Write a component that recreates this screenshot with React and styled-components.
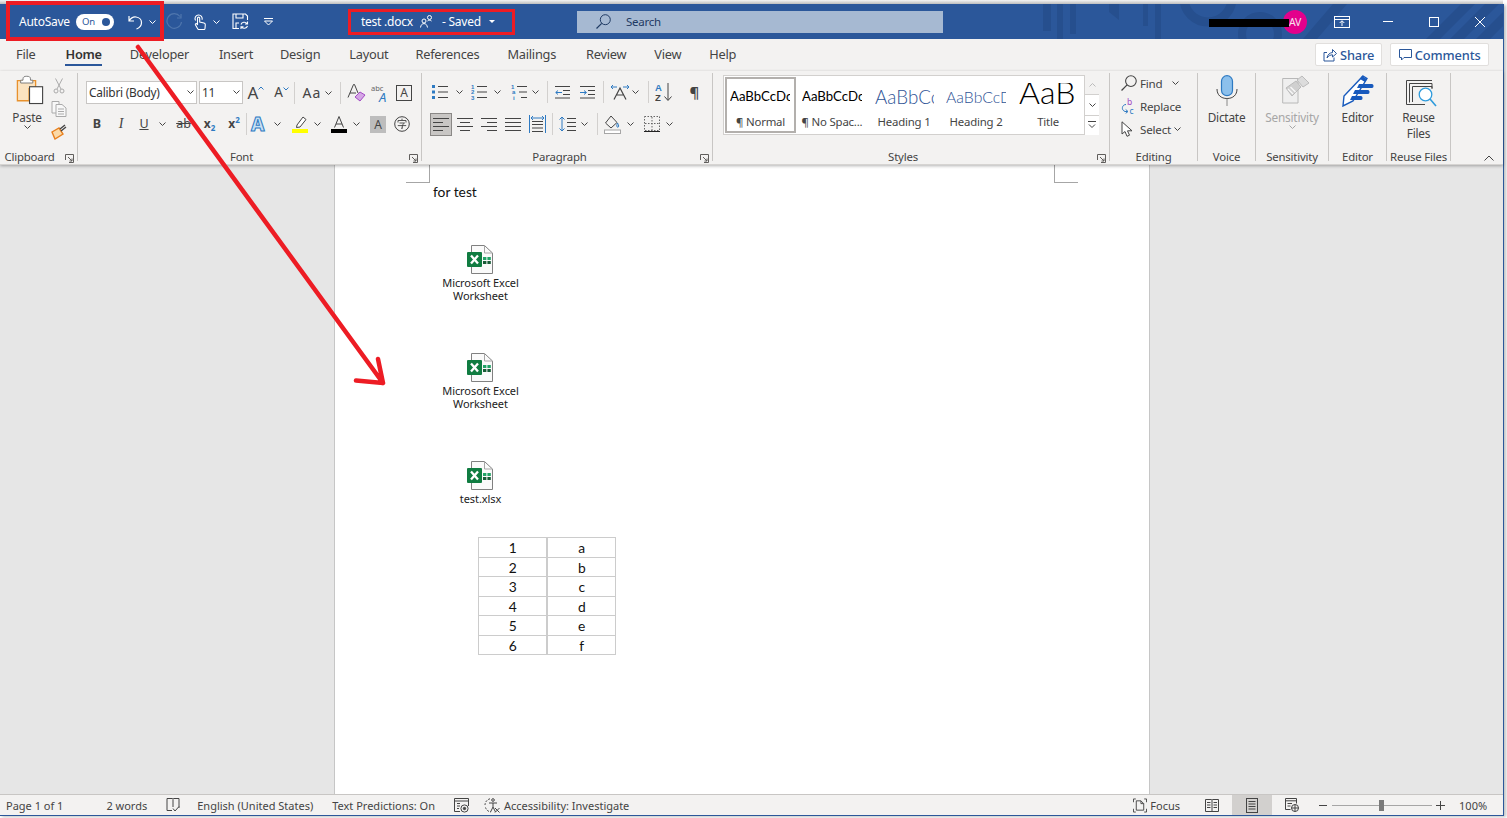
import React from "react";
import styled, { createGlobalStyle } from "styled-components";

const Global = createGlobalStyle`
  html, body { margin: 0; padding: 0; background: #fff; }
  #root { width: 1507px; height: 818px; overflow: hidden; }
  * { box-sizing: border-box; }
`;

const UI = `"Noto Sans", "Open Sans", "Liberation Sans", sans-serif`;
const BODY = `Lato, "Liberation Sans", sans-serif`;

const Viewport = styled.div`
  position: relative; width: 1507px; height: 818px; overflow: hidden;
  background: #fff; padding-top: 4px; font-family: ${UI}; color: #444;
`;
const TopShade = styled.div`
  position: absolute; left: 0; right: 4px; top: 0; height: 4px;
  background: linear-gradient(#f4f4f4, #bdbdbd);
`;
const Window = styled.div`
  width: 1504px; height: 812px; display: flex; flex-direction: column;
  border-right: 1px solid #2b579a; border-bottom: 1px solid #2b579a;
  box-shadow: 2px 1px 3px rgba(0,0,0,.25);
`;

/* ---------- title bar ---------- */
const TitleBar = styled.header`
  position: relative; height: 35px; flex: none; background: #2b579a; color: #fff;
  display: flex; align-items: center; padding-left: 19px; font-size: 12px; letter-spacing: -.25px;
  overflow: hidden;
`;
const Pattern = styled.svg`
  position: absolute; right: 0; top: 0; width: 460px; height: 35px;
`;
const TitleItem = styled.div`
  position: relative; flex: none; display: flex; align-items: center; justify-content: ${p => p.$start ? "flex-start" : "center"};
  width: ${p => p.$w}px; height: 24px; margin-left: ${p => p.$ml || 0}px; white-space: nowrap;
`;
const Toggle = styled.div`
  position: relative; flex: none; width: 38px; height: 16px; margin-left: 6px; border-radius: 8px;
  background: #fff; color: #2b579a; display: flex; align-items: center; justify-content: space-between;
  padding: 0 4px 0 6px; font-size: 9.5px;
`;
const ToggleDot = styled.span`
  width: 8px; height: 8px; border-radius: 50%; background: #2b579a;
`;
const SearchBox = styled.div`
  position: relative; flex: none; margin-left: 76px; width: 366px; height: 22px; background: #a6b9d2; color: #1f3a63;
  display: flex; align-items: center; padding-left: 19px; gap: 15px; font-size: 11.5px;
`;
const Redaction = styled.div`
  position: relative; z-index: 1; flex: none; margin: 3px 0 0 266px; width: 80px; height: 8px; background: #000;
`;
const Avatar = styled.div`
  position: relative; flex: none; margin-left: -6px; width: 24px; height: 24px; border-radius: 50%; background: #e3008c;
  color: #f8e0ee; display: flex; align-items: center; justify-content: center; font-size: 10.5px;
`;
const WinControls = styled.div`
  position: relative; display: flex; margin-left: auto;
`;
const WinButton = styled.div`
  width: 46px; height: 35px; display: flex; align-items: center; justify-content: center;
`;

/* ---------- tabs ---------- */
const TabRow = styled.nav`
  flex: none; height: 32px; background: #f3f2f1; display: flex; align-items: flex-start; padding-left: 16px; font-size: 12.8px; letter-spacing: -.25px;
`;
const Tab = styled.div`
  position: relative; margin-left: ${p => p.$ml}px; height: 27px; line-height: 31px; white-space: nowrap; color: #444;
  font-weight: ${p => p.$active ? 600 : 400};
  ${p => p.$active && `color:#333; border-bottom: 2px solid #2b579a;`}
`;
const ShareButton = styled.div`
  flex: none; width: ${p => p.$w}px; height: 23px; margin: 4px 0 0 ${p => p.$ml}px; background: #fff; border: 1px solid #e1dfdd; border-radius: 2px;
  display: flex; align-items: center; justify-content: center; gap: 3px; color: #2b579a; font-weight: 500; font-size: 12.8px; letter-spacing: -.1px;
`;

/* ---------- ribbon ---------- */
const Ribbon = styled.section`
  position: relative; z-index: 2; flex: none; height: 94px; background: #f3f2f1; display: flex; align-items: flex-start; padding-top: 2px;
  box-shadow: 0 1px 3px rgba(0,0,0,.3); border-bottom: 1px solid #d6d4d2;
`;
const Group = styled.div`
  position: relative; flex: none; width: ${p => p.$w}px; height: 88px; border-right: 1px solid #c8c6c4; display: flex; flex-direction: column;
`;
const GroupBody = styled.div`
  flex: 1; min-height: 0; display: ${p => p.$row ? "flex" : "block"}; justify-content: ${p => p.$center ? "center" : "flex-start"};
`;
const GroupLabel = styled.div`
  flex: none; height: 14px; margin-bottom: -3px; line-height: 14px; text-align: center; font-size: 11.4px; letter-spacing: -.2px; color: #444; white-space: nowrap;
  padding-right: ${p => p.$pr || 0}px;
`;
const Launcher = styled.svg`
  position: absolute; right: 3px; bottom: -2px; width: 9px; height: 9px;
`;
const ToolRow = styled.div`
  display: flex; align-items: center; height: ${p => p.$h || 24}px; padding-left: ${p => p.$pl || 0}px; margin-top: ${p => p.$mt || 0}px;
`;
const Tool = styled.div`
  flex: none; width: ${p => p.$w}px; height: 24px; display: flex; align-items: center; justify-content: center; position: relative;
  color: #444;
`;
const ActiveTool = styled(Tool)`
  height: 23px; background: #c8c6c4; border: 1px solid #8a8886;
`;
const RowSep = styled.div`
  flex: none; width: 1px; height: 22px; background: #d2d0ce;
`;
const Combo = styled.div`
  flex: none; width: ${p => p.$w}px; height: 23px; margin-right: ${p => p.$mr || 0}px; background: #fff; border: 1px solid #c8c6c4;
  display: flex; align-items: center; justify-content: space-between; padding: 0 2px 2px 2px; font-size: 11.9px; letter-spacing: -.25px; color: #333; white-space: nowrap;
`;
const LetterA = styled.span`
  font-size: ${p => p.$size || 14}px; line-height: 1; font-weight: ${p => p.$weight || 400};
  font-style: ${p => p.$italic ? "italic" : "normal"}; color: ${p => p.$color || "#444"};
  text-decoration: ${p => p.$deco || "none"}; font-family: ${p => p.$serif ? `"Liberation Serif", serif` : UI};
  letter-spacing: ${p => p.$ls || 0}px;
`;
const Sub = styled.sub`
  font-size: 8px; color: #2e7ac2; line-height: 0; font-weight: 700;
`;
const Sup = styled.sup`
  font-size: 8px; color: #2e7ac2; line-height: 0; font-weight: 700;
`;
const LargeButton = styled.div`
  flex: none; width: ${p => p.$w}px; display: flex; flex-direction: column; align-items: center; padding-top: 2px;
  font-size: 11.8px; letter-spacing: -.2px; line-height: 16px; color: ${p => p.$muted ? "#a6a6a6" : "#444"}; text-align: center;
  margin-left: ${p => p.$ml || 0}px;
`;
const LargeIcon = styled.div`
  height: 32px; margin-bottom: 2px; padding-left: ${p => p.$pl || 0}px; padding-top: ${p => p.$pt || 0}px; display: flex; align-items: flex-start; justify-content: center;
`;
const SmallColumn = styled.div`
  flex: none; width: 24px; margin-left: 1px; display: flex; flex-direction: column; padding-top: 1px;
`;
const SmallCell = styled.div`
  height: 23px; display: flex; align-items: center; justify-content: center;
`;
const EditRow = styled.div`
  height: 20px; margin-bottom: 3px; display: flex; align-items: center; padding-left: 11px; font-size: 11.6px; letter-spacing: -.2px; color: #444;
`;
const EditIcon = styled.div`
  width: 19px; flex: none; display: flex; align-items: center;
`;

/* gallery */
const Gallery = styled.div`
  margin: 2px 0 0 10px; width: 376px; height: 60px; background: #fff; border: 1px solid #d2d0ce; display: flex; padding: 1px 0 1px 1px;
`;
const StyleItem = styled.div`
  flex: none; width: ${p => p.$w}px; height: 56px; overflow: hidden; display: flex; flex-direction: column; align-items: flex-start;
  border: ${p => p.$active ? "2px solid #b3b0ad" : "2px solid transparent"};
`;
const StylePreview = styled.div`
  flex: none; height: ${p => p.$clipTop ? 31 : 36}px; margin-top: ${p => p.$clipTop ? 4 : 0}px; margin-bottom: ${p => p.$clipTop ? 0 : -1}px; padding-bottom: ${p => p.$clipTop ? 14 : 0}px;
  margin-left: ${p => p.$ml}px; width: ${p => p.$cw}px; overflow: hidden; white-space: nowrap; display: flex; align-items: center; justify-content: flex-start;
  font-family: ${BODY}; font-weight: ${p => p.$light ? 300 : 400};
  font-size: ${p => p.$size}px; color: ${p => p.$color || "#000"}; line-height: 1;
`;
const StyleName = styled.div`
  align-self: center; font-size: 11.4px; letter-spacing: -.2px; color: #444; line-height: 16px; white-space: nowrap;
`;
const GalleryScroll = styled.div`
  margin-left: auto; flex: none; width: 15px; margin-top: -2px; margin-bottom: -2px; display: flex; flex-direction: column; border-left: 1px solid #d2d0ce;
`;
const GalleryBtn = styled.div`
  flex: 1; display: flex; align-items: center; justify-content: center; background: ${p => p.$off ? "#f3f2f1" : "#fff"};
  border-bottom: 1px solid #d2d0ce; &:last-child { border-bottom: 0; }
`;
const Collapse = styled.svg`
  position: absolute; left: 1484px; top: 84px; width: 10px; height: 6px;
`;

/* ---------- document ---------- */
const DocArea = styled.main`
  flex: 1; min-height: 0; background: #e6e6e6; padding-left: 334px; overflow: hidden;
`;
const Page = styled.article`
  position: relative; width: 816px; height: 100%; background: #fff; border-left: 1px solid #c6c6c6; border-right: 1px solid #c6c6c6;
  padding: 18px 0 0 98px; font-family: ${BODY}; color: #111;
`;
const CropMark = styled.div`
  position: absolute; top: 0; width: 24px; height: 18px; border-bottom: 1px solid #a6a6a6;
  ${p => p.$left ? `left: 71px; border-right: 1px solid #a6a6a6;` : `left: 719px; border-left: 1px solid #a6a6a6;`}
`;
const Paragraph = styled.p`
  margin: 0; font-size: 13.8px; line-height: 18px; height: 18px;
`;
const Objects = styled.div`
  margin-top: 44px; width: 95px; display: flex; flex-direction: column; gap: 51px;
`;
const Embedded = styled.div`
  display: flex; flex-direction: column; align-items: center; gap: 2px; font-family: ${UI}; font-size: 11px; line-height: 13px; color: #222; text-align: center; letter-spacing: -.08px; white-space: nowrap;
`;
const DataTable = styled.table`
  margin: 32px 0 0 45px; width: 138px; border-collapse: separate; border-spacing: 0; table-layout: fixed; font-family: ${BODY}; font-size: 13.8px; color: #111;
  border-top: 1px solid #ccc; border-left: 1px solid #ccc;
`;
const Cell = styled.td`
  height: 19.5px; padding: 1px 0 0 1px; text-align: center; line-height: 17.5px; border-right: 1px solid #ccc; border-bottom: 1px solid #ccc;
  &:first-child { border-right-width: 2px; }
`;

/* ---------- status bar ---------- */
const StatusBar = styled.footer`
  position: relative; flex: none; height: 21px; background: #f3f2f1; border-top: 1px solid #c8c6c4; display: flex; align-items: center; font-size: 11px; color: #444;
`;
const StatusText = styled.span`
  flex: none; white-space: nowrap; margin-left: ${p => p.$ml || 0}px;
`;
const StatusIcon = styled.div`
  flex: none; width: ${p => p.$w}px; height: 20px; display: flex; align-items: center; justify-content: center; margin-left: ${p => p.$ml || 0}px;
  background: ${p => p.$active ? "#d2d0ce" : "transparent"};
`;
const Slider = styled.div`
  position: relative; flex: none; width: 100px; height: 1px; margin-left: 5px; background: #a6a6a6;
`;
const SliderThumb = styled.div`
  position: absolute; left: 47px; top: -5px; width: 5px; height: 11px; background: #7a7a7a;
`;

/* ---------- annotations ---------- */
const RedBox = styled.div`
  position: absolute; left: ${p => p.$x}px; top: ${p => p.$y}px; width: ${p => p.$w}px; height: ${p => p.$h}px; border: ${p => p.$b}px solid #ed1c24; z-index: 5;
`;
const ArrowOverlay = styled.svg`
  position: absolute; left: 0; top: 0; width: 1507px; height: 818px; z-index: 5; pointer-events: none;
`;

/* ---------- icons ---------- */
const S = { fill: "none", stroke: "#444", strokeWidth: 1 };
const Chev = ({ c = "#444" }) => (
  <svg width="7" height="4" viewBox="0 0 7 4" style={{ flex: "none" }}><path d="M.5.5 3.5 3.5 6.5.5" fill="none" stroke={c} /></svg>
);
const Launch = () => (
  <Launcher viewBox="0 0 9 9"><path d="M.5 6V.5H8.5V8.5H4M3 3 7 7M7 4.5V7H4.5" fill="none" stroke="#605e5c" /></Launcher>
);
const ExcelIcon = () => (
  <svg width="27" height="29" viewBox="0 0 27 29">
    <path d="M4.5.5H17.5L25.5 8V28.5H4.5Z" fill="#fafafa" stroke="#808080" />
    <path d="M17.5.5V8H25.5" fill="none" stroke="#a6a6a6" />
    <rect x="0" y="7" width="15" height="15" rx="1" fill="#107c41" />
    <path d="M4 10.5 11 18.5M11 10.5 4 18.5" stroke="#fff" strokeWidth="2.3" />
    <path d="M16 12h3.4v3H16zM20.4 12h3.4v3h-3.4z" fill="#21a366" />
    <path d="M16 16h3.4v3H16zM20.4 16h3.4v3h-3.4z" fill="#185c37" />
  </svg>
);
const PasteIcon = () => (
  <svg width="28" height="30" viewBox="0 0 30 31">
    <path d="M1.5 5.5H21V14H14V27H1.5Z" fill="#fbe3c0" stroke="#e8912d" strokeWidth="1.4" />
    <path d="M7.5 5V3.5C7.5 1.5 9 .8 11.5.8S15.5 1.5 15.5 3.5V5H18V8H5V5Z" fill="#fff" stroke="#777" />
    <rect x="14.5" y="12" width="14" height="18" fill="#fff" stroke="#444" strokeWidth="1.2" />
  </svg>
);
const Cut = () => (
  <svg width="12" height="16" viewBox="0 0 12 16" {...S} stroke="#aaa">
    <path d="M2.5.5 8 11M9.5.5 4 11" /><circle cx="3" cy="13" r="2" /><circle cx="9" cy="13" r="2" />
  </svg>
);
const Copy = () => (
  <svg width="16" height="16" viewBox="0 0 16 16" fill="#f8f8f8" stroke="#aaa">
    <path d="M1 .5H8V12H1Z" /><path d="M5 3.5H11L15 7V15.5H5Z" /><path d="M7 8h6M7 10.5h6M7 13h6" />
  </svg>
);
const Painter = () => (
  <svg width="16" height="16" viewBox="0 0 16 16">
    <path d="M1 8 8 4 12 10 4 15Z" fill="#fbd9a6" stroke="#e8801e" strokeWidth="1.4" />
    <path d="M9 5 14 1M10 7 15 3" stroke="#444" strokeWidth="1.4" />
  </svg>
);
const Undo = ({ c = "#fff" }) => (
  <svg width="15" height="16" viewBox="0 0 15 16" fill="none" stroke={c} strokeWidth="1.2">
    <path d="M1 2V7H6M1.2 6.8C3 4 5.5 2.6 8 3c3.4.5 5.5 3 5.5 5.5 0 3-2.3 5.5-5 6.5" />
  </svg>
);
const Redo = () => (
  <svg width="17" height="17" viewBox="0 0 17 17" fill="none" stroke="#4f76ad" strokeWidth="1.2">
    <path d="M14 3.5A7.3 7.3 0 1 0 15.5 9M15 1V5H11" />
  </svg>
);
const Touch = () => (
  <svg width="13" height="17" viewBox="0 0 13 17" fill="none" stroke="#fff" strokeWidth="1.1">
    <path d="M2.6 7.5A3.6 3.6 0 1 1 9 6.8" /><path d="M4.5 12V5.2c0-1.5 2.2-1.5 2.2 0V9L11 10c1 .3 1.4 1 1.3 2l-.3 3.5c-.1.7-.5 1-1 1H6c-.6 0-1-.3-1.3-.8L2.5 12c-.6-1.2 1-2 1.8-.8Z" />
  </svg>
);
const SaveSync = () => (
  <svg width="17" height="17" viewBox="0 0 17 17" fill="none" stroke="#fff" strokeWidth="1.1">
    <path d="M7 15.5H1V1H13.5L15.5 3V7" /><path d="M4 1V5H11V1M4 15V10H7" />
    <path d="M9 11.5A3.5 3.5 0 0 1 15 10.5M15.5 8.5V11H13M15.5 13A3.5 3.5 0 0 1 9.5 14M9 16V13.7H11.5" />
  </svg>
);
const Customize = () => (
  <svg width="9" height="8" viewBox="0 0 9 8"><path d="M0 .5H9" stroke="#fff" /><path d="M.5 3H8.5L4.5 7Z" fill="none" stroke="#fff" /></svg>
);
const MoreChev = () => (
  <svg width="8" height="8" viewBox="0 0 8 8"><path d="M0 .5H8" stroke="#444" /><path d="M1 3.5 4 6.5 7 3.5" fill="none" stroke="#444" /></svg>
);
const People = () => (
  <svg width="13" height="13" viewBox="0 0 13 13" fill="none" stroke="#fff">
    <circle cx="4" cy="6" r="2" /><path d="M.5 12.5C1 9.8 2.2 8.6 4 8.6S7 9.8 7.5 12.5" />
    <circle cx="9.5" cy="2.5" r="2" /><path d="M7.5 6C8.2 5 10.5 5 11.5 6" />
  </svg>
);
const Caret = ({ c = "#fff" }) => (
  <svg width="6" height="3" viewBox="0 0 6 3"><path d="M0 0H6L3 3Z" fill={c} /></svg>
);
const Magnifier = ({ c = "#1f3a63", size = 15 }) => (
  <svg width={size} height={size} viewBox="0 0 15 15" fill="none" stroke={c}><circle cx="9.3" cy="5.7" r="5" /><path d="M5.7 9.3 .5 14.5" strokeWidth="1.2" /></svg>
);
const RibbonDisplay = () => (
  <svg width="16" height="12" viewBox="0 0 16 12" fill="none" stroke="#fff">
    <rect x=".5" y=".5" width="15" height="11" /><path d="M.5 3.5H15.5" /><path d="M8 10V5M5.7 7 8 4.7 10.3 7" />
  </svg>
);
const ShareIcon = () => (
  <svg width="14" height="14" viewBox="0 0 14 14" fill="none" stroke="#2b579a">
    <path d="M11 9.5V13H1V4.5H4" /><path d="M4 10C4.5 6.5 7 4.6 9.5 4.6V1.5L13.5 5.5 9.5 9V6.8C7.5 6.8 5.5 7.8 4 10Z" />
  </svg>
);
const CommentIcon = () => (
  <svg width="13" height="12" viewBox="0 0 13 12" fill="none" stroke="#2b579a"><path d="M.5.5H12.5V8.5H5L2.5 11V8.5H.5Z" /></svg>
);
const Bullets = ({ kind }) => (
  <svg width="17" height="16" viewBox="0 0 17 16">
    {[2, 7.5, 13].map((y, i) => (
      <g key={y}>
        {kind === "bullet" && <rect x="0" y={y - 1} width="3" height="3" fill="#2e7ac2" />}
        {kind === "number" && <text x="0" y={y + 2.5} fontSize="6" fontWeight="700" fill="#2e7ac2" fontFamily="Liberation Sans">{i + 1}</text>}
        {kind === "multi" && <text x={i} y={y + 2.5} fontSize="6" fontWeight="700" fill="#2e7ac2" fontFamily="Liberation Sans">{["1", "a", "i"][i]}</text>}
        <path d={`M${kind === "multi" ? 6 + i * 2 : 6} ${y + .5}H16`} stroke="#444" />
      </g>
    ))}
  </svg>
);
const Indent = ({ dir }) => (
  <svg width="16" height="14" viewBox="0 0 16 14" fill="none" stroke="#444">
    <path d="M0 1.5H15M8 5.5H15M8 9.5H15M0 13H15" />
    <path d={dir === "in" ? "M0 7.5H6M4 5.5 6.5 7.5 4 9.5" : "M1 7.5H7M3 5.5 .7 7.5 3 9.5"} stroke="#2e7ac2" />
  </svg>
);
const TextDirection = () => (
  <svg width="20" height="16" viewBox="0 0 20 16">
    <path d="M1 3H7M1 3 3 1M1 3 3 5M13 3H19M19 3 17 1M19 3 17 5" fill="none" stroke="#2e7ac2" />
    <path d="M4 15.5 10 4 16 15.5M6.5 11H13.5" fill="none" stroke="#444" strokeWidth="1.2" />
  </svg>
);
const Sort = () => (
  <svg width="19" height="20" viewBox="0 0 19 20">
    <text x="0" y="9" fontSize="9.5" fontWeight="700" fill="#2e7ac2" fontFamily="Liberation Sans">A</text>
    <text x="0" y="19" fontSize="9.5" fontWeight="700" fill="#444" fontFamily="Liberation Sans">Z</text>
    <path d="M13 1V18M9.5 14.5 13 18.5 16.5 14.5" fill="none" stroke="#444" />
  </svg>
);
const Align = ({ k }) => {
  const m = {
    left: [[0, 16], [0, 10], [0, 16], [0, 10]],
    center: [[0, 16], [3, 13], [0, 16], [3, 13]],
    right: [[0, 16], [6, 16], [0, 16], [6, 16]],
    justify: [[0, 16], [0, 16], [0, 16], [0, 16]],
  }[k];
  return (
    <svg width="16" height="14" viewBox="0 0 16 14">
      {m.map((r, i) => <path key={i} d={`M${r[0]} ${i * 4 + 1}.5H${r[1]}`} stroke="#444" />)}
    </svg>
  );
};
const Distributed = () => (
  <svg width="17" height="18" viewBox="0 0 17 18" fill="none">
    <path d="M3 9.5H14M3 13H14M3 16.5H14M3 6.5H14" stroke="#444" />
    <path d="M.5 0V18M16.5 0V18M2 3H15M2 3 4 1M2 3 4 5M15 3 13 1M15 3 13 5" stroke="#2e7ac2" />
  </svg>
);
const LineSpacing = () => (
  <svg width="18" height="16" viewBox="0 0 18 16" fill="none">
    <path d="M3 1V15M.5 3.5 3 1 5.5 3.5M.5 12.5 3 15 5.5 12.5" stroke="#2e7ac2" />
    <path d="M8 2.5H17M8 6.5H17M8 10.5H17M8 14.5H17" stroke="#444" />
  </svg>
);
const Shading = () => (
  <svg width="17" height="19" viewBox="0 0 17 19" fill="none">
    <path d="M7 1 1.5 8 7 13 13 7.5Z" stroke="#444" /><path d="M13.5 8C15 10.5 15 12 13.8 12.3 12.5 12 12.5 10.5 13.5 8Z" stroke="#2e7ac2" />
    <rect x=".5" y="15" width="16" height="3.5" fill="#fff" stroke="#a6a6a6" />
  </svg>
);
const Borders = () => (
  <svg width="16" height="16" viewBox="0 0 16 16" fill="none" stroke="#666" strokeDasharray="1.5 1.5">
    <rect x=".5" y=".5" width="15" height="14" /><path d="M8 1V15M1 7.5H15" />
    <path d="M0 15.5H16" stroke="#222" strokeDasharray="none" />
  </svg>
);
const Eraser = () => (
  <svg width="19" height="19" viewBox="0 0 19 19">
    <path d="M1 14.5 6.5 1.5H7.5L11 10M3 10H9" fill="none" stroke="#444" />
    <path d="M8 14 13 9 18 12 13 18Z" fill="#d5a6e6" stroke="#a24bc4" />
  </svg>
);
const AbcA = () => (
  <svg width="19" height="18" viewBox="0 0 19 18">
    <text x="0" y="6.5" fontSize="7.5" fill="#666" fontFamily="Noto Sans">abc</text>
    <text x="8" y="17.5" fontSize="13" fontStyle="italic" fill="#2e7ac2" fontFamily="Noto Sans">A</text>
  </svg>
);
const BoxA = styled.div`
  width: 16px; height: 16px; flex: none; border: 1px solid #444; display: flex; align-items: center; justify-content: center; font-size: 12px; color: #444;
`;
const TextEffect = () => (
  <svg width="20" height="19" viewBox="0 0 20 19">
    <text x="1" y="16" fontSize="19" fontWeight="800" fill="#c7e0f4" stroke="#2e7ac2" strokeWidth="1" fontFamily="Noto Sans">A</text>
  </svg>
);
const Highlighter = () => (
  <svg width="16" height="18" viewBox="0 0 16 18">
    <path d="M5 10 11 2 14 4.5 8 12 4.5 12.5Z" fill="#fff" stroke="#444" />
    <rect x="0" y="14" width="16" height="4" fill="#ffff00" />
  </svg>
);
const FontColor = () => (
  <svg width="16" height="18" viewBox="0 0 16 18">
    <path d="M3.5 12.5 8 1.5 12.5 12.5M5 9H11" fill="none" stroke="#444" />
    <rect x="0" y="14" width="16" height="4" fill="#000" />
  </svg>
);
const CharShade = styled.div`
  width: 16px; height: 17px; background: #bdbdbd; display: flex; align-items: center; justify-content: center; font-size: 12px; color: #444;
`;
const Enclose = () => (
  <svg width="16" height="16" viewBox="0 0 16 16" fill="none" stroke="#444" style={{ flex: "none" }}>
    <circle cx="8" cy="8" r="7.3" />
    <path d="M8 2.6V4M4 6.5V4.5H12V6.5M5.5 7H10.5L8.3 9V12.5L7 12M3.8 9.6H12.2" strokeWidth=".9" />
  </svg>
);
const Replace = () => (
  <svg width="15" height="16" viewBox="0 0 15 16">
    <text x="6" y="7" fontSize="8.5" fill="#a24bc4" fontFamily="Noto Sans">b</text>
    <text x="8.5" y="15.5" fontSize="8.5" fill="#2e7ac2" fontFamily="Noto Sans">c</text>
    <path d="M5 6.5C1 6.5-.2 12 4 13.5H6.5M4.7 11.5 7 13.5 4.7 15.3" fill="none" stroke="#2e7ac2" />
  </svg>
);
const SelectCursor = () => (
  <svg width="13" height="16" viewBox="0 0 13 16"><path d="M1 .8V13L4 10.5 6 15.3 8.5 14.2 6.5 9.8H11Z" fill="#fff" stroke="#444" /></svg>
);
const Mic = () => (
  <svg width="22" height="31" viewBox="0 0 22 31">
    <rect x="5.5" y=".7" width="11" height="20" rx="5.5" fill="#8cc0ec" stroke="#2e7ac2" strokeWidth="1.2" />
    <path d="M1 14C1 20 5 23.5 11 23.5S21 20 21 14" fill="none" stroke="#444" />
    <path d="M11 23.5V31" stroke="#888" />
  </svg>
);
const Sensitivity = () => (
  <svg width="28" height="29" viewBox="0 0 28 29">
    <path d="M.7 3.5H16V28H.7Z" fill="#efefef" stroke="#b8b8b8" />
    <path d="M4 13 14 6 19 12 10 21Z" fill="#d0d0d0" stroke="#bbb" />
    <path d="M6 14 11 19M8.5 12 13.5 17" stroke="#f8f8f8" strokeWidth="1.3" />
    <path d="M15 5 20 1 27 8 21 12Z" fill="#dcdcdc" stroke="#bbb" />
  </svg>
);
const Pen = () => (
  <svg width="32" height="32" viewBox="0 0 32 32">
    <path d="M21 1 25 3.5 11 26 1 31 2 21Z" fill="#fff" stroke="#185abd" strokeWidth="1.4" />
    <path d="M20 1 25 4 23 7 18 4Z" fill="#185abd" />
    <path d="M17 9H30C32 9 32 13 30 13H15ZM13 15H26C28 15 28 19 26 19H11ZM10 21H19C21 21 21 25 19 25H8Z" fill="#185abd" />
  </svg>
);
const ReuseFiles = () => (
  <svg width="31" height="28" viewBox="0 0 31 28" fill="none">
    <path d="M.5 21V.5H26M3.5 22.5V3.5H26V8" stroke="#444" />
    <path d="M.5 21V24.5H19M6.5 22V6.5H26V9" stroke="#444" />
    <circle cx="19.5" cy="14.5" r="6.3" fill="#fff" stroke="#2e9bdc" strokeWidth="1.3" />
    <path d="M24 19 30 26" stroke="#2e9bdc" strokeWidth="1.6" />
  </svg>
);
const BookCheck = () => (
  <svg width="14" height="14" viewBox="0 0 14 14" fill="none" stroke="#444">
    <path d="M1 .5H6.5L7 1.5 7.5.5H13V10M7 2V9M1 .5V12.5H6" /><path d="M7 10.5 9 13 13 8.5" />
  </svg>
);
const MacroIcon = () => (
  <svg width="15" height="15" viewBox="0 0 15 15" fill="none" stroke="#444">
    <path d="M.5 .5H14.5V8M.5 .5V13.5H6M.5 3H14.5" /><path d="M3 5.5H6M3 8H6M3 10.5H5" />
    <circle cx="10.5" cy="10.5" r="3.6" /><circle cx="10.5" cy="10.5" r="1.2" fill="#444" />
  </svg>
);
const Accessibility = () => (
  <svg width="16" height="15" viewBox="0 0 16 15" fill="none" stroke="#444">
    <path d="M6 .8A6.5 6.5 0 0 0 1 7" strokeDasharray="2 1.3" /><path d="M1.5 9.5A6.5 6.5 0 0 0 7 14" strokeDasharray="2 1.3" />
    <circle cx="9" cy="2" r="1.3" /><path d="M5 5H13M9 5V9M6.5 14 9 9 11.5 14" /><path d="M11 10 15.5 14.5M15.5 10 11 14.5" />
  </svg>
);
const FocusIcon = () => (
  <svg width="15" height="15" viewBox="0 0 15 15" fill="none" stroke="#444">
    <path d="M.5 4V.5H3M12 .5H14.5V4M14.5 11V14.5H12M3 14.5H.5V11" /><path d="M3.5 12.5V2.5H8.5L11.5 5.5V12.5Z" /><path d="M8.5 2.5V5.5H11.5" />
  </svg>
);
const ReadIcon = () => (
  <svg width="14" height="13" viewBox="0 0 14 13" fill="none" stroke="#444">
    <path d="M.5.5H6.5L7 1.2 7.5.5H13.5V12.5H.5ZM7 1.2V12.5" /><path d="M2 3.5H5.5M2 6H5.5M2 8.5H5.5M8.5 3.5H12M8.5 6H12M8.5 8.5H12" />
  </svg>
);
const PrintIcon = () => (
  <svg width="12" height="15" viewBox="0 0 12 15" fill="none" stroke="#444">
    <rect x=".5" y=".5" width="11" height="14" /><path d="M2.5 3.5H9.5M2.5 6H9.5M2.5 8.5H9.5M2.5 11H9.5" />
  </svg>
);
const WebIcon = () => (
  <svg width="14" height="14" viewBox="0 0 14 14" fill="none" stroke="#444">
    <path d="M5.5 11.5H.5V.5H11.5V5.5M.5 2.8H11.5M2.5 5.5H7M2.5 8H5.5" />
    <circle cx="10" cy="10" r="3.5" fill="#f3f2f1" /><path d="M6.5 10H13.5M10 6.5V13.5" />
  </svg>
);

const Patterned = () => (
  <Pattern viewBox="0 0 460 35">
    <g fill="#264f8e">
      <path d="M0 0h8v27H0zM14 0h6v35h-6zM27 0h6v30h-6zM66 0h10v16l-10-8zM100 0h5v22h-5zM112 0h6v35h-6z" />
      <path d="M418 0h14L397 35h-14zM442 0h14L421 35h-14zM460 8v14l-13 13h-14z" />
      <path d="M290 0h14l-30 35h-14z" />
    </g>
    <circle cx="217" cy="30" r="18" fill="none" stroke="#264f8e" strokeWidth="8" />
    <circle cx="165" cy="-6" r="24" fill="none" stroke="#264f8e" strokeWidth="9" />
  </Pattern>
);

const styles = [
  { name: "¶ Normal", text: "AaBbCcDc", size: 13.2, w: 71, ml: 3, cw: 60, active: true },
  { name: "¶ No Spac...", text: "AaBbCcDc", size: 13.2, w: 72, ml: 4, cw: 60 },
  { name: "Heading 1", text: "AaBbCc", size: 18.8, w: 72, ml: 5, cw: 59, color: "#2f5496", light: true },
  { name: "Heading 2", text: "AaBbCcD", size: 15.8, w: 72, ml: 4, cw: 60, color: "#2f5496", light: true },
  { name: "Title", text: "AaB", size: 32, w: 72, ml: 5, cw: 58, light: true, clipTop: true },
];
const rows = [["1", "a"], ["2", "b"], ["3", "c"], ["4", "d"], ["5", "e"], ["6", "f"]];
const tabs = [
  ["File", 0], ["Home", 30], ["Developer", 28], ["Insert", 30], ["Design", 27], ["Layout", 29],
  ["References", 27], ["Mailings", 28], ["Review", 30], ["View", 28], ["Help", 28],
];

export default function App() {
  return (
    <Viewport>
      <Global />
      <TopShade />
      <Window>
        <TitleBar>
          <Patterned />
          <TitleItem $w={51} $start>AutoSave</TitleItem>
          <Toggle>On<ToggleDot /></Toggle>
          <TitleItem $w={26} $ml={8}><Undo /></TitleItem>
          <TitleItem $w={8}><Chev c="#fff" /></TitleItem>
          <TitleItem $w={36}><Redo /></TitleItem>
          <TitleItem $w={14}><Touch /></TitleItem>
          <TitleItem $w={20}><Chev c="#fff" /></TitleItem>
          <TitleItem $w={28}><SaveSync /></TitleItem>
          <TitleItem $w={28}><Customize /></TitleItem>
          <TitleItem $w={51} $ml={79} $start>test .docx</TitleItem>
          <TitleItem $w={28}><People /></TitleItem>
          <TitleItem $w={41} $ml={2} $start>- Saved</TitleItem>
          <TitleItem $w={18}><Caret /></TitleItem>
          <SearchBox><Magnifier />Search</SearchBox>
          <Redaction />
          <Avatar>AV</Avatar>
          <WinControls>
            <WinButton><RibbonDisplay /></WinButton>
            <WinButton><svg width="10" height="1" viewBox="0 0 10 1"><path d="M0 .5H10" stroke="#fff" /></svg></WinButton>
            <WinButton><svg width="10" height="10" viewBox="0 0 10 10"><rect x=".5" y=".5" width="9" height="9" fill="none" stroke="#fff" /></svg></WinButton>
            <WinButton><svg width="10" height="10" viewBox="0 0 10 10"><path d="M0 0 10 10M10 0 0 10" stroke="#fff" /></svg></WinButton>
          </WinControls>
        </TitleBar>

        <TabRow>
          {tabs.map(([t, ml]) => <Tab key={t} $ml={ml} $active={t === "Home"}>{t}</Tab>)}
          <ShareButton $w={67} $ml={579}><ShareIcon />Share</ShareButton>
          <ShareButton $w={99} $ml={8}><CommentIcon />Comments</ShareButton>
        </TabRow>

        <Ribbon>
          <Group $w={78}>
            <GroupBody $row>
              <LargeButton $w={38} $ml={8}>
                <LargeIcon $pl={5}><PasteIcon /></LargeIcon>
                Paste
                <Chev />
              </LargeButton>
              <SmallColumn>
                <SmallCell><Cut /></SmallCell>
                <SmallCell><Copy /></SmallCell>
                <SmallCell><Painter /></SmallCell>
              </SmallColumn>
            </GroupBody>
            <GroupLabel $pr={18}>Clipboard</GroupLabel>
            <Launch />
          </Group>

          <Group $w={344}>
            <GroupBody>
              <ToolRow $h={23} $pl={8} $mt={8}>
                <Combo $w={111} $mr={2}>Calibri (Body)<Chev /></Combo>
                <Combo $w={44}>11<Chev /></Combo>
                <Tool $w={26}><LetterA $size={17}>A</LetterA><svg width="6" height="4" viewBox="0 0 6 4" style={{ marginBottom: 9 }}><path d="M.5 3.5 3 1 5.5 3.5" fill="none" stroke="#2e7ac2" /></svg></Tool>
                <Tool $w={25}><LetterA $size={13.5}>A</LetterA><svg width="6" height="4" viewBox="0 0 6 4" style={{ marginBottom: 7 }}><path d="M.5.5 3 3 5.5.5" fill="none" stroke="#2e7ac2" /></svg></Tool>
                <RowSep />
                <Tool $w={45}><LetterA $size={14} $ls={1}>Aa</LetterA>&nbsp;<Chev /></Tool>
                <RowSep />
                <Tool $w={30}><Eraser /></Tool>
                <Tool $w={19}><AbcA /></Tool>
                <Tool $w={28}><BoxA>A</BoxA></Tool>
              </ToolRow>
              <ToolRow $pl={8} $mt={8}>
                <Tool $w={22}><LetterA $weight={700} $size={12.5}>B</LetterA></Tool>
                <Tool $w={26}><LetterA $italic $serif $size={14}>I</LetterA></Tool>
                <Tool $w={20}><LetterA $deco="underline" $size={12.5}>U</LetterA></Tool>
                <Tool $w={16}><Chev /></Tool>
                <Tool $w={27}><LetterA $deco="line-through" $size={12.5}>ab</LetterA></Tool>
                <Tool $w={25}><LetterA $weight={700} $size={12}>x<Sub>2</Sub></LetterA></Tool>
                <Tool $w={24}><LetterA $weight={700} $size={12}>x<Sup>2</Sup></LetterA></Tool>
                <RowSep />
                <Tool $w={26}><TextEffect /></Tool>
                <Tool $w={8}><Chev /></Tool>
                <Tool $w={7} />
                <Tool $w={24}><Highlighter /></Tool>
                <Tool $w={10}><Chev /></Tool>
                <Tool $w={5} />
                <Tool $w={24}><FontColor /></Tool>
                <Tool $w={10}><Chev /></Tool>
                <Tool $w={34}><CharShade>A</CharShade></Tool>
                <Tool $w={14}><Enclose /></Tool>
              </ToolRow>
            </GroupBody>
            <GroupLabel $pr={16}>Font</GroupLabel>
            <Launch />
          </Group>

          <Group $w={291}>
            <GroupBody>
              <ToolRow $pl={8} $mt={7}>
                <Tool $w={21}><Bullets kind="bullet" /></Tool>
                <Tool $w={16}><Chev /></Tool>
                <Tool $w={25}><Bullets kind="number" /></Tool>
                <Tool $w={10}><Chev /></Tool>
                <Tool $w={6} />
                <Tool $w={23}><Bullets kind="multi" /></Tool>
                <Tool $w={9}><Chev /></Tool>
                <Tool $w={7} />
                <RowSep />
                <Tool $w={30}><Indent dir="out" /></Tool>
                <Tool $w={19}><Indent dir="in" /></Tool>
                <Tool $w={6} />
                <RowSep />
                <Tool $w={5} />
                <Tool $w={22}><TextDirection /></Tool>
                <Tool $w={8}><Chev /></Tool>
                <Tool $w={9} />
                <RowSep />
                <Tool $w={30}><Sort /></Tool>
                <Tool $w={31}><LetterA $size={15} $weight={600}>¶</LetterA></Tool>
              </ToolRow>
              <ToolRow $pl={8} $mt={8}>
                <ActiveTool $w={22}><Align k="left" /></ActiveTool>
                <Tool $w={25}><Align k="center" /></Tool>
                <Tool $w={24}><Align k="right" /></Tool>
                <Tool $w={24}><Align k="justify" /></Tool>
                <Tool $w={24}><Distributed /></Tool>
                <Tool $w={3} />
                <RowSep />
                <Tool $w={4} />
                <Tool $w={22}><LineSpacing /></Tool>
                <Tool $w={10}><Chev /></Tool>
                <Tool $w={8} />
                <RowSep />
                <Tool $w={28}><Shading /></Tool>
                <Tool $w={8}><Chev /></Tool>
                <Tool $w={3} />
                <Tool $w={30}><Borders /></Tool>
                <Tool $w={4}><Chev /></Tool>
              </ToolRow>
            </GroupBody>
            <GroupLabel $pr={15}>Paragraph</GroupLabel>
            <Launch />
          </Group>

          <Group $w={397}>
            <GroupBody>
              <Gallery>
                {styles.map(s => (
                  <StyleItem key={s.name} $w={s.w} $active={s.active}>
                    <StylePreview $size={s.size} $color={s.color} $light={s.light} $ml={s.ml} $cw={s.cw} $clipTop={s.clipTop}>{s.text}</StylePreview>
                    <StyleName>{s.name}</StyleName>
                  </StyleItem>
                ))}
                <GalleryScroll>
                  <GalleryBtn $off><svg width="7" height="4" viewBox="0 0 7 4"><path d="M.5 3.5 3.5.5 6.5 3.5" fill="none" stroke="#bbb" /></svg></GalleryBtn>
                  <GalleryBtn><Chev /></GalleryBtn>
                  <GalleryBtn><MoreChev /></GalleryBtn>
                </GalleryScroll>
              </Gallery>
            </GroupBody>
            <GroupLabel $pr={16}>Styles</GroupLabel>
            <Launch />
          </Group>

          <Group $w={88}>
            <GroupBody>
              <EditRow><EditIcon><Magnifier c="#444" size={16} /></EditIcon>Find<Tool $w={26}><Chev /></Tool></EditRow>
              <EditRow><EditIcon><Replace /></EditIcon>Replace</EditRow>
              <EditRow><EditIcon><SelectCursor /></EditIcon>Select<Tool $w={12}><Chev /></Tool></EditRow>
            </GroupBody>
            <GroupLabel>Editing</GroupLabel>
          </Group>

          <Group $w={58}>
            <GroupBody $row $center>
              <LargeButton $w={50}><LargeIcon><Mic /></LargeIcon>Dictate</LargeButton>
            </GroupBody>
            <GroupLabel>Voice</GroupLabel>
          </Group>

          <Group $w={73}>
            <GroupBody $row $center>
              <LargeButton $w={68} $muted><LargeIcon $pl={7}><Sensitivity /></LargeIcon>Sensitivity<Chev c="#a6a6a6" /></LargeButton>
            </GroupBody>
            <GroupLabel>Sensitivity</GroupLabel>
          </Group>

          <Group $w={58}>
            <GroupBody $row $center>
              <LargeButton $w={50}><LargeIcon><Pen /></LargeIcon>Editor</LargeButton>
            </GroupBody>
            <GroupLabel>Editor</GroupLabel>
          </Group>

          <Group $w={64}>
            <GroupBody $row $center>
              <LargeButton $w={50}><LargeIcon $pl={5} $pt={5}><ReuseFiles /></LargeIcon>Reuse<br />Files</LargeButton>
            </GroupBody>
            <GroupLabel>Reuse Files</GroupLabel>
          </Group>
          <Collapse viewBox="0 0 10 6"><path d="M.5 5.5 5 1 9.5 5.5" fill="none" stroke="#444" /></Collapse>
        </Ribbon>

        <DocArea>
          <Page>
            <CropMark $left />
            <CropMark />
            <Paragraph>for test</Paragraph>
            <Objects>
              <Embedded><ExcelIcon /><span>Microsoft Excel<br />Worksheet</span></Embedded>
              <Embedded><ExcelIcon /><span>Microsoft Excel<br />Worksheet</span></Embedded>
              <Embedded><ExcelIcon /><span>test.xlsx</span></Embedded>
            </Objects>
            <DataTable>
              <tbody>
                {rows.map(r => <tr key={r[0]}><Cell>{r[0]}</Cell><Cell>{r[1]}</Cell></tr>)}
              </tbody>
            </DataTable>
          </Page>
        </DocArea>

        <StatusBar>
          <StatusText $ml={6}>Page 1 of 1</StatusText>
          <StatusText $ml={43}>2 words</StatusText>
          <StatusIcon $w={14} $ml={19}><BookCheck /></StatusIcon>
          <StatusText $ml={17}>English (United States)</StatusText>
          <StatusText $ml={19}>Text Predictions: On</StatusText>
          <StatusIcon $w={15} $ml={19}><MacroIcon /></StatusIcon>
          <StatusIcon $w={16} $ml={15}><Accessibility /></StatusIcon>
          <StatusText $ml={4}>Accessibility: Investigate</StatusText>
          <StatusIcon $w={14} $ml={504}><FocusIcon /></StatusIcon>
          <StatusText $ml={3}>Focus</StatusText>
          <StatusIcon $w={14} $ml={25}><ReadIcon /></StatusIcon>
          <StatusIcon $w={40} $ml={13} $active><PrintIcon /></StatusIcon>
          <StatusIcon $w={14} $ml={13}><WebIcon /></StatusIcon>
          <StatusIcon $w={9} $ml={19}><svg width="8" height="1" viewBox="0 0 8 1"><path d="M0 .5H8" stroke="#444" /></svg></StatusIcon>
          <Slider><SliderThumb /></Slider>
          <StatusIcon $w={9} $ml={4}><svg width="9" height="9" viewBox="0 0 9 9"><path d="M0 4.5H9M4.5 0V9" stroke="#444" /></svg></StatusIcon>
          <StatusText $ml={14}>100%</StatusText>
        </StatusBar>
      </Window>

      <RedBox $x={6} $y={1} $w={158} $h={40} $b={4} />
      <RedBox $x={348} $y={9} $w={167} $h={26} $b={3} />
      <ArrowOverlay viewBox="0 0 1507 818">
        <path d="M138 47 383 383M356 380.5 383 383 378 359" fill="none" stroke="#ed1c24" strokeWidth="4.5" strokeLinecap="round" strokeLinejoin="round" />
      </ArrowOverlay>
    </Viewport>
  );
}
